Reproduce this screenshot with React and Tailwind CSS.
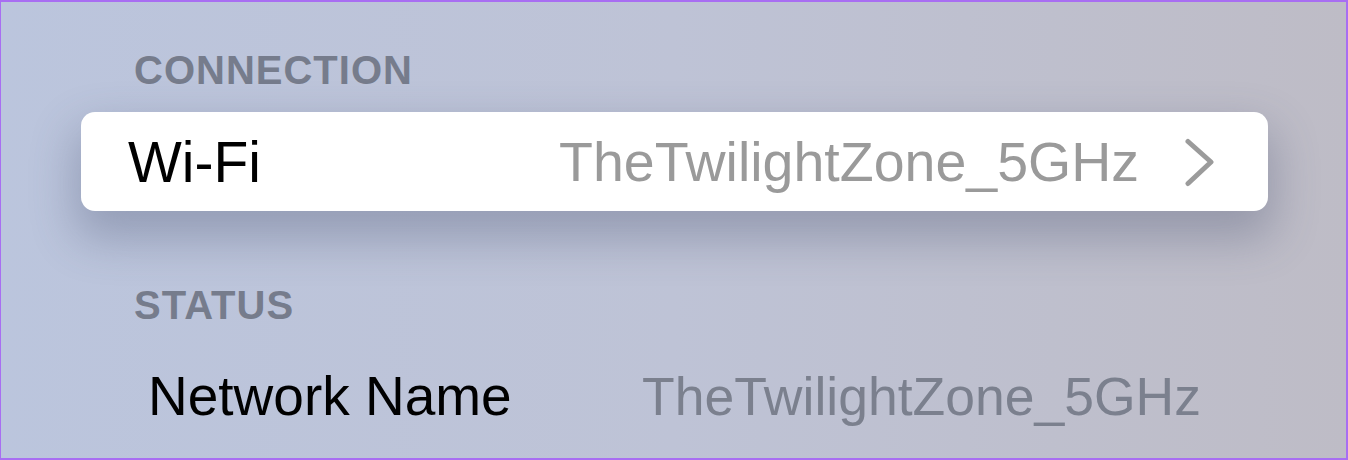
export default function App() {
  const font = { fontFamily: '"Liberation Sans", Arial, Helvetica, sans-serif' };
  return (
    <div
      className="w-[1348px] h-[460px] overflow-hidden border-t-2 border-l border-r-2 border-b-2 border-[#a86ef2] bg-gradient-to-r from-[#bbc5dd] via-[#bec3d6] to-[#bebcc6]"
      style={font}
    >
      <div className="flex flex-col pt-[48px]">
        <div className="ml-[133px] text-[40px] leading-[40px] font-bold tracking-[1px] text-[#767c8c]">
          CONNECTION
        </div>

        <div className="mt-[22px] ml-[80px] w-[1187px] h-[99px] rounded-[14px] bg-white flex items-center pl-[47px] pr-[50px] shadow-[0_22px_45px_6px_rgba(70,80,110,0.33)]">
          <div className="flex-1 text-[57px] leading-[56px] text-black">Wi-Fi</div>
          <div className="text-[55.5px] leading-[56px] text-[#9a9a9a]">TheTwilightZone_5GHz</div>
          <svg className="ml-[43px]" width="36" height="50" viewBox="0 0 36 50" fill="none">
            <path d="M6 4.5 L29 25 L6 46.5" stroke="#9b9b9b" strokeWidth="5" strokeLinecap="round" strokeLinejoin="round" />
          </svg>
        </div>

        <div className="mt-[74px] ml-[133px] text-[40px] leading-[40px] font-bold tracking-[1px] text-[#767c8c]">
          STATUS
        </div>

        <div className="mt-[45px] ml-[147px] mr-[145px] flex justify-between items-center">
          <div className="text-[55px] leading-[53px] text-black">Network Name</div>
          <div className="text-[53.5px] leading-[53px] text-[#7b808e]">TheTwilightZone_5GHz</div>
        </div>
      </div>
    </div>
  );
}
